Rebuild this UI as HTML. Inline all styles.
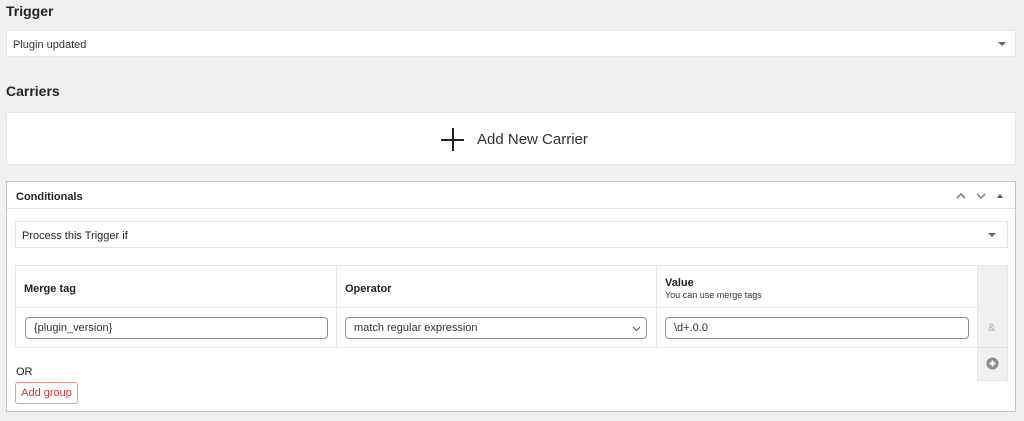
<!DOCTYPE html>
<html><head><meta charset="utf-8"><style>
*{box-sizing:border-box;margin:0;padding:0}
body{width:1024px;height:421px;background:#f0f0f1;font-family:"Liberation Sans",sans-serif;color:#1d2327;position:relative;overflow:hidden;font-size:11px}
.a{position:absolute}
.h{font-weight:bold;font-size:14px}
.box{background:#fff;border:1px solid #e2e2e4}
.inp{background:#fff;border:1px solid #8c8f94;border-radius:4px;font-size:11px;padding-left:8px;line-height:20px;color:#2c3338}
.caret{width:0;height:0;border-left:4px solid transparent;border-right:4px solid transparent;border-top:4px solid #666}
</style></head><body>
<div class="a h" style="left:6px;top:3px">Trigger</div>
<div class="a box" style="left:6px;top:30px;width:1010px;height:27px;border-color:#e6e6e6"><span class="a" style="left:6px;top:8px;font-size:11px;color:#2c3338">Plugin updated</span><div class="a caret" style="left:991px;top:11px"></div></div>
<div class="a h" style="left:6px;top:83px">Carriers</div>
<div class="a box" style="left:6px;top:112px;width:1010px;height:53px;border-color:#e6e6e6">
<div class="a" style="left:434px;top:26px;width:23px;height:2px;background:#1d2327"></div>
<div class="a" style="left:445px;top:15px;width:2px;height:23px;background:#1d2327"></div>
<span class="a" style="left:470px;top:18px;font-size:15px;color:#2c3338">Add New Carrier</span></div>
<div class="a box" style="left:6px;top:181px;width:1010px;height:231px;border-color:#c3c4c7">
<div class="a" style="left:0;top:0;width:1008px;height:27px;border-bottom:1px solid #e0e0e0"></div>
<span class="a" style="left:9px;top:9px;font-weight:bold;font-size:11px">Conditionals</span>
<svg class="a" style="left:948px;top:8px" width="60" height="12"><path d="M2 8l4-4 4 4M22 4l4 4 4-4" stroke="#777" stroke-width="1.5" fill="none"/><path d="M42 8l3-4 3 4z" fill="#555"/></svg>
<div class="a box" style="left:8px;top:39px;width:993px;height:27px"><span class="a" style="left:6px;top:8px">Process this Trigger if</span><div class="a caret" style="left:972px;top:11px"></div></div>
<div class="a" style="left:8px;top:83px;width:963px;height:83px;border:1px solid #e6e6e6"></div>
<div class="a" style="left:8px;top:125px;width:963px;height:1px;background:#e6e6e6"></div>
<div class="a" style="left:329px;top:83px;width:1px;height:83px;background:#e6e6e6"></div>
<div class="a" style="left:649px;top:83px;width:1px;height:83px;background:#e6e6e6"></div>
<div class="a" style="left:970px;top:83px;width:31px;height:116px;background:#f0f0f1;border:1px solid #e6e6e6"></div>
<div class="a" style="left:970px;top:165px;width:31px;height:1px;background:#e0e0e0"></div>
<span class="a" style="left:17px;top:101px;font-weight:bold">Merge tag</span>
<span class="a" style="left:338px;top:101px;font-weight:bold">Operator</span>
<span class="a" style="left:658px;top:95px;font-weight:bold">Value</span>
<span class="a" style="left:658px;top:108px;font-size:9px;color:#333">You can use merge tags</span>
<div class="a inp" style="left:18px;top:135px;width:303px;height:22px">{plugin_version}</div>
<div class="a inp" style="left:338px;top:135px;width:302px;height:22px">match regular expression<svg class="a" style="left:286px;top:8px" width="9" height="6"><path d="M1 1l3.5 3.5 3.5-3.5" stroke="#555" fill="none"/></svg></div>
<div class="a inp" style="left:658px;top:135px;width:304px;height:22px">\d+.0.0</div>
<span class="a" style="left:981px;top:140px;color:#aaa">&amp;</span>
<svg class="a" style="left:979px;top:175px" width="13" height="13"><circle cx="6.5" cy="6.5" r="6" fill="#8c8c8c"/><path d="M3.5 6.5h6M6.5 3.5v6" stroke="#fff" stroke-width="2"/></svg>
<span class="a" style="left:9px;top:184px;font-size:11px">OR</span>
<div class="a" style="left:8px;top:200px;width:63px;height:22px;border:1px solid #ea9a9a;border-radius:3px;color:#d63638;font-size:11px;line-height:20px;text-align:center">Add group</div>
</div>
</body></html>
